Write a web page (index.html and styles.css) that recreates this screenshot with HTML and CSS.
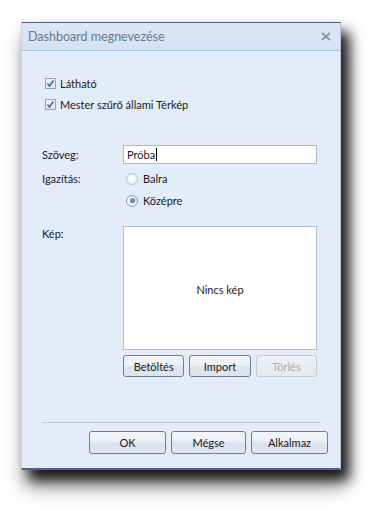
FILE: index.html
```html
<!DOCTYPE html>
<html>
<head>
<meta charset="utf-8">
<link rel="stylesheet" href="styles.css">
</head>
<body>
<div class="page">
<div class="dialog">
  <div class="titlebar">
    <span class="title">Dashboard megnevezése</span>
    <svg class="close" width="10" height="9" viewBox="0 0 10 9"><path d="M1 1 L9 8 M9 1 L1 8" stroke="#8796a6" stroke-width="1.8" fill="none"/></svg>
  </div>
  <div class="content">
    <div class="checks">
      <label class="check-row"><span class="cb"><svg width="9" height="9" viewBox="0 0 9 9"><path d="M1.5 4.5 L3.5 7 L7.5 1.5" fill="none" stroke="#4a6a8e" stroke-width="1.6"/></svg></span>Látható</label>
      <label class="check-row"><span class="cb"><svg width="9" height="9" viewBox="0 0 9 9"><path d="M1.5 4.5 L3.5 7 L7.5 1.5" fill="none" stroke="#4a6a8e" stroke-width="1.6"/></svg></span>Mester szűrő állami Térkép</label>
    </div>
    <div class="form">
      <div class="lbl lbl-text">Szöveg:</div>
      <div class="input">Próba<span class="caret"></span></div>
      <div class="lbl lbl-align">Igazítás:</div>
      <div class="radios">
        <div class="radio-row"><span class="radio"></span>Balra</div>
        <div class="radio-row"><span class="radio on"><span class="dot"></span></span>Középre</div>
      </div>
      <div class="lbl lbl-img">Kép:</div>
      <div class="imgcol">
        <div class="imgbox">Nincs kép</div>
        <div class="imgbtns">
          <div class="btn">Betöltés</div>
          <div class="btn">Import</div>
          <div class="btn disabled">Törlés</div>
        </div>
      </div>
    </div>
    <div class="sep"></div>
    <div class="footer">
      <div class="btn big">OK</div>
      <div class="btn big mid">Mégse</div>
      <div class="btn big">Alkalmaz</div>
    </div>
  </div>
</div>
</div>
</body>
</html>
```
FILE: styles.css
```css
html, body { margin: 0; padding: 0; background: #ffffff; }
body {
  font-family: Lato, "Open Sans", sans-serif;
  font-size: 11px;
  color: #1a1a1a;
}
.page {
  height: 512px;
  padding: 22px 0 0 21px;
  box-sizing: border-box;
}
.dialog {
  width: 320px;
  height: 448px;
  box-sizing: border-box;
  background: #e3ecf9;
  border-top: 1px solid #4b5f7e;
  border-left: 1px solid #c8d5e6;
  border-right: 1px solid #b6c6da;
  border-bottom: 2px solid #4b6590;
  box-shadow: 8px 10px 12px rgba(0,0,0,0.85), 4px 16px 20px rgba(0,0,0,0.4);
  display: flex;
  flex-direction: column;
}
.titlebar {
  height: 28px;
  box-sizing: border-box;
  background: linear-gradient(#dde7f5, #d5e2f2);
  border-bottom: 1px solid #a9c1dc;
  display: flex;
  align-items: center;
  justify-content: space-between;
  padding: 0 9px 0 6px;
}
.title {
  font-size: 12.5px;
  color: #667a90;
}
.close { display: block; margin-top: -1px; }
.content {
  flex: 1;
  display: flex;
  flex-direction: column;
  padding: 26px 12px 0 20px;
}
.checks {
  display: flex;
  flex-direction: column;
  gap: 8px;
  padding-left: 3px;
}
.check-row {
  display: flex;
  align-items: center;
  gap: 4px;
  height: 13px;
}
.cb {
  width: 11px;
  height: 11px;
  box-sizing: border-box;
  border: 1px solid #8ea4bf;
  background: linear-gradient(#f0f4f9, #dfe7f1);
  display: flex;
  align-items: center;
  justify-content: center;
}
.form {
  margin-top: 34px;
  display: grid;
  grid-template-columns: 81px 194px;
  row-gap: 8px;
}
.lbl { color: #1a1a1a; }
.lbl-text { align-self: center; }
.lbl-align { line-height: 13px; }
.lbl-img { margin-top: 12px; }
.input {
  height: 19px;
  box-sizing: border-box;
  background: #fff;
  border: 1px solid #a8b8ce;
  padding-left: 3px;
  display: flex;
  align-items: center;
  line-height: 1;
}
.caret {
  display: inline-block;
  width: 1px;
  height: 13px;
  background: #000;
  margin-left: 1px;
}
.radios {
  display: flex;
  flex-direction: column;
  gap: 9px;
  padding-left: 3px;
}
.radio-row {
  display: flex;
  align-items: center;
  gap: 5px;
  height: 13px;
}
.radio {
  width: 12px;
  height: 12px;
  box-sizing: border-box;
  border-radius: 50%;
  border: 1px solid #b7c3d1;
  background: radial-gradient(circle at 40% 40%, #ffffff, #dfe5ec);
  display: flex;
  align-items: center;
  justify-content: center;
}
.radio.on { border-color: #8b9fb8; }
.dot {
  width: 5px;
  height: 5px;
  border-radius: 50%;
  background: radial-gradient(circle at 40% 35%, #7fa6d0, #2f5d91);
}
.imgcol {
  display: flex;
  flex-direction: column;
  gap: 5px;
  margin-top: 11px;
}
.imgbox {
  height: 124px;
  box-sizing: border-box;
  background: #fff;
  border: 1px solid #afbccd;
  display: flex;
  align-items: center;
  justify-content: center;
  padding-top: 2px;
}
.imgbtns {
  display: flex;
  gap: 5px;
}
.imgbtns .btn { width: 62px; }
.btn {
  height: 22px;
  box-sizing: border-box;
  border: 1px solid #6f7e92;
  border-radius: 3px;
  background: linear-gradient(#f4f7fb 0%, #eaf0f6 45%, #dbe3ec 55%, #dfe6ee 100%);
  display: flex;
  align-items: center;
  justify-content: center;
  color: #1a1a1a;
}
.btn.disabled {
  border-color: #c2cbd6;
  color: #a4adb8;
  background: linear-gradient(#eef2f7, #e4eaf1);
}
.sep {
  margin-top: 45px;
  width: 278px;
  height: 1px;
  background: #b9c8d9;
}
.footer {
  margin-top: 8px;
  display: flex;
  justify-content: flex-end;
  gap: 5px;
}
.btn.big { width: 77px; height: 23px; }
.btn.big.mid { width: 75px; }
```
